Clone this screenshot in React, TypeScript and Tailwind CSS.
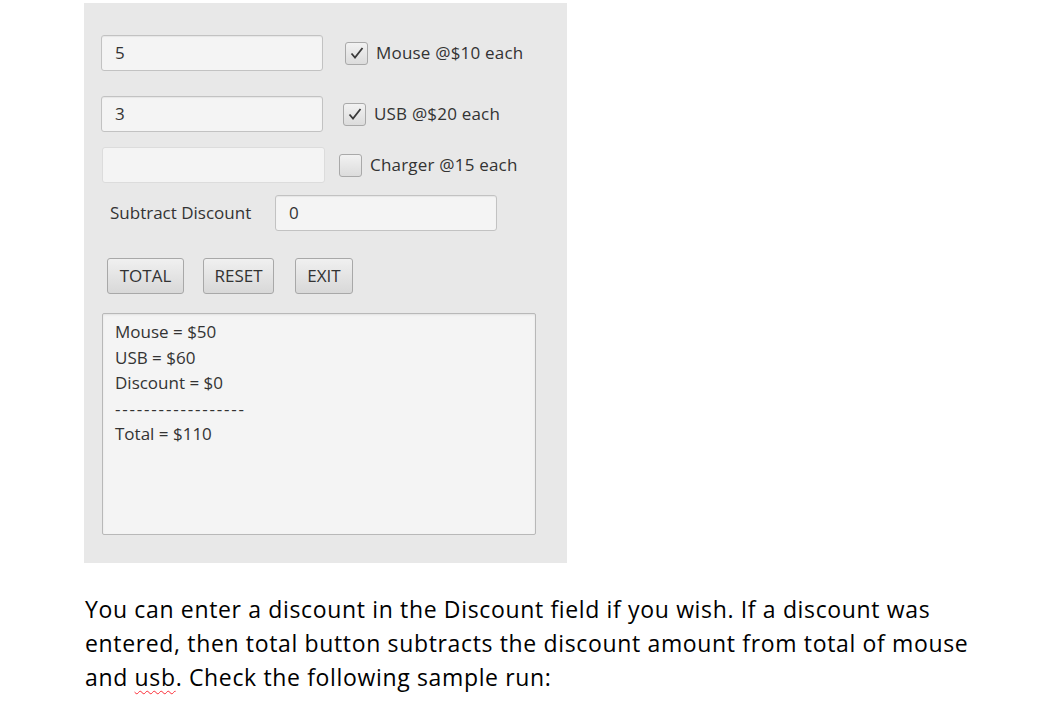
import React from "react";

const ui = { fontFamily: '"Open Sans", "Noto Sans", sans-serif' };

function Field({ value, className = "" }: { value?: string; className?: string }) {
  return (
    <div
      className={`h-[36px] rounded-[3px] border border-[#c2c2c2] bg-[#f4f4f4] flex items-center pl-[13px] text-[17px] text-[#333] shadow-[inset_0_1px_1px_rgba(0,0,0,0.06)] ${className}`}
    >
      {value}
    </div>
  );
}

function Check({ checked, label, className = "" }: { checked: boolean; label: string; className?: string }) {
  return (
    <div className={`flex items-center gap-[8px] ${className}`}>
      <div className="w-[23px] h-[23px] rounded-[3px] border border-[#a9a9a9] bg-gradient-to-b from-[#f2f2f2] to-[#dcdcdc] flex items-center justify-center">
        {checked && (
          <svg width="16" height="16" viewBox="0 0 16 16">
            <path d="M2.5 8.5 L6 12.5 L13.5 3" fill="none" stroke="#3a3a3a" strokeWidth="1.8" />
          </svg>
        )}
      </div>
      <span className="text-[17px] text-[#333] tracking-[0.2px]">{label}</span>
    </div>
  );
}

function Btn({ label, className = "" }: { label: string; className?: string }) {
  return (
    <div
      className={`h-[36px] rounded-[3px] border border-[#a8a8a8] bg-gradient-to-b from-[#f0f0f0] to-[#d8d8d8] flex items-center justify-center text-[17px] text-[#333] ${className}`}
    >
      {label}
    </div>
  );
}

export default function App() {
  return (
    <div className="w-[1061px] h-[713px] bg-white overflow-hidden">
      <div
        className="ml-[84px] mt-[3px] w-[483px] h-[560px] bg-[#e8e8e8] flex flex-col pl-[17px] pt-[32px]"
        style={ui}
      >
        <div className="flex items-center">
          <Field value="5" className="w-[222px]" />
          <Check checked label="Mouse @$10 each" className="ml-[22px]" />
        </div>
        <div className="flex items-center mt-[25px]">
          <Field value="3" className="w-[222px]" />
          <Check checked label="USB @$20 each" className="ml-[20px]" />
        </div>
        <div className="flex items-center mt-[15px]">
          <Field className="w-[223px] ml-[1px] border-[#dcdcdc] shadow-none" />
          <Check checked={false} label="Charger @15 each" className="ml-[14px]" />
        </div>
        <div className="flex items-center mt-[12px]">
          <span className="ml-[9px] w-[165px] text-[17px] text-[#333]">Subtract Discount</span>
          <Field value="0" className="w-[222px]" />
        </div>
        <div className="flex items-center mt-[27px] ml-[6px]">
          <Btn label="TOTAL" className="w-[77px]" />
          <Btn label="RESET" className="w-[71px] ml-[19px]" />
          <Btn label="EXIT" className="w-[58px] ml-[21px]" />
        </div>
        <div className="mt-[19px] ml-[1px] w-[434px] h-[222px] rounded-[2px] border border-[#b8b8b8] bg-[#f4f4f4] pl-[12px] pt-[5px] text-[17px] text-[#333] leading-[25.5px] shadow-[inset_0_1px_2px_rgba(0,0,0,0.08)]">
          <div>Mouse = $50</div>
          <div>USB = $60</div>
          <div>Discount = $0</div>
          <div className="tracking-[1.8px]">------------------</div>
          <div>Total = $110</div>
        </div>
      </div>
      <div
        className="ml-[85px] mt-[29px] text-[23px] leading-[34px] tracking-[0.65px] text-black"
        style={{ fontFamily: '"Open Sans", "Noto Sans", sans-serif' }}
      >
        <div className="whitespace-nowrap">You can enter a discount in the Discount field if you wish. If a discount was</div>
        <div className="whitespace-nowrap">entered, then total button subtracts the discount amount from total of mouse</div>
        <div className="whitespace-nowrap">
          and <span className="underline decoration-wavy decoration-red-500 decoration-1 underline-offset-4">usb</span>. Check the following sample run:
        </div>
      </div>
    </div>
  );
}
